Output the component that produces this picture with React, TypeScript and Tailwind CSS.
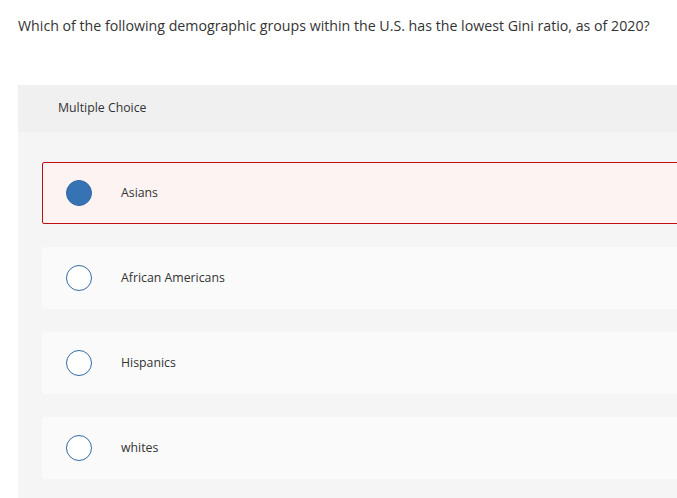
import React from "react";

const options = ["Asians", "African Americans", "Hispanics", "whites"];

export default function App() {
  return (
    <div className="w-[677px] h-[498px] overflow-hidden bg-white" style={{ fontFamily: '"Open Sans", "Liberation Sans", Arial, sans-serif' }}>
      <div className="pt-[16px] pl-[18px] text-[14.2px] leading-[20px] text-[#333]">
        Which of the following demographic groups within the U.S. has the lowest Gini ratio, as of 2020?
      </div>
      <div className="ml-[18px] mt-[49px] w-[700px] bg-[#f5f5f5]">
        <div className="h-[47px] bg-[#f0f0f0] pl-[40px] flex items-center text-[12.3px] text-[#333]">Multiple Choice</div>
        <div className="pl-[24px] pt-[30px] pb-[30px] flex flex-col gap-[23px]">
          {options.map((o, i) => {
            const sel = i === 0;
            return (
              <div
                key={o}
                className={
                  sel
                    ? "h-[62px] w-[680px] rounded-[2px] border border-[#c00e0e] bg-[#fdf3f2] flex items-center"
                    : "h-[62px] w-[680px] rounded-[2px] border border-transparent bg-[#fafafa] flex items-center"
                }
              >
                <div className="ml-[23px] w-[26px] h-[26px] rounded-full flex-none">
                  {sel ? (
                    <div className="w-[26px] h-[26px] rounded-full bg-[#3673b5] border border-[#2f65a0]" />
                  ) : (
                    <div className="w-[26px] h-[26px] rounded-full bg-white border-[1.5px] border-[#336aa3]" />
                  )}
                </div>
                <span className="ml-[29px] text-[12.3px] text-[#333]">{o}</span>
              </div>
            );
          })}
        </div>
      </div>
    </div>
  );
}
